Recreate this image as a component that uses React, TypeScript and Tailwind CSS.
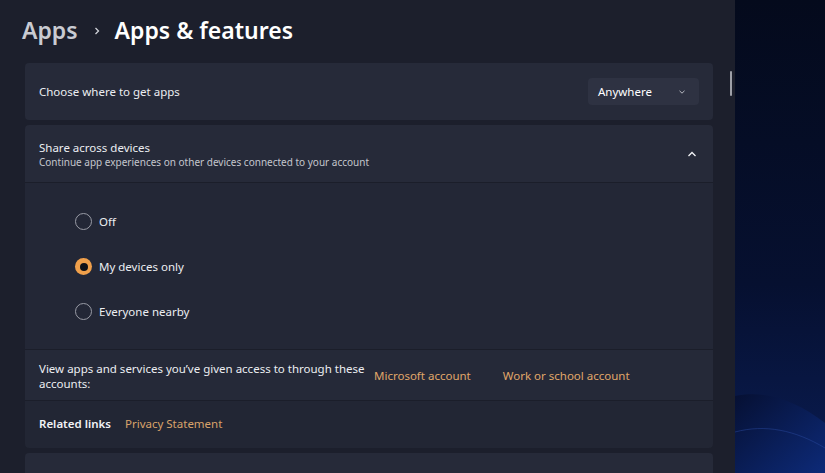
import React from 'react';

const font = { fontFamily: '"Noto Sans", "Open Sans", sans-serif' };

function Radio({ checked, label }: { checked?: boolean; label: string }) {
  return (
    <div className="flex items-center gap-[7px] h-[17px]">
      {checked ? (
        <span className="w-[17px] h-[17px] rounded-full bg-[#f0a04b] flex items-center justify-center">
          <span className="w-[8px] h-[8px] rounded-full bg-[#101218]" />
        </span>
      ) : (
        <span className="w-[17px] h-[17px] rounded-full border border-[#9a9ca6]" />
      )}
      <span className="text-[11.5px] text-[#eceef2]">{label}</span>
    </div>
  );
}

function Wallpaper() {
  return (
    <svg viewBox="0 0 90 473" preserveAspectRatio="none" className="w-full h-full block">
      <defs>
        <linearGradient id="wp" x1="0" y1="0" x2="0" y2="1">
          <stop offset="0" stopColor="#040a1c" />
          <stop offset="0.6" stopColor="#061030" />
          <stop offset="1" stopColor="#0a1c52" />
        </linearGradient>
        <linearGradient id="arc" x1="0" y1="0" x2="1" y2="1">
          <stop offset="0" stopColor="#061033" />
          <stop offset="1" stopColor="#0d2a78" />
        </linearGradient>
      </defs>
      <rect width="90" height="473" fill="url(#wp)" />
      <path d="M0 396 C30 390 60 400 90 423 L90 473 L0 473 Z" fill="url(#arc)" />
      <path d="M0 432 C30 424 60 430 90 448" fill="none" stroke="#2a4aa0" strokeWidth="0.8" opacity="0.6" />
    </svg>
  );
}

export default function App() {
  return (
    <div className="w-[825px] h-[473px] overflow-hidden flex bg-[#1c1f2c]" style={font}>
      {/* Settings window */}
      <div className="w-[735px] h-full flex flex-col bg-[#1c1f2c] pl-[25px]">
        <div className="h-[63px] shrink-0 flex items-center -ml-[3px] pb-[2px]">
          <span className="text-[23px] font-semibold text-[#c9cbd2]">Apps</span>
          <svg width="10" height="10" viewBox="0 0 10 10" className="ml-[14px] mt-[1px]">
            <path d="M3.5 2 L6.5 5 L3.5 8" fill="none" stroke="#d0d2d8" strokeWidth="1.3" />
          </svg>
          <span className="text-[23px] font-semibold text-white ml-[13px]">Apps &amp; features</span>
        </div>

        <div className="flex shrink-0">
          <div className="w-[688px] flex flex-col gap-[5px]">
            {/* Choose where to get apps */}
            <div className="h-[57px] rounded-[4px] bg-[#262a39] flex items-center justify-between pl-[14px] pr-[14px]">
              <span className="text-[11.5px] text-[#eceef2]">Choose where to get apps</span>
              <div className="w-[111px] h-[27px] rounded-[4px] bg-[#2e3242] flex items-center justify-between pl-[10px] pr-[12px]">
                <span className="text-[11.5px] text-white">Anywhere</span>
                <svg width="10" height="10" viewBox="0 0 10 10">
                  <path d="M2.5 3.8 L5 6.2 L7.5 3.8" fill="none" stroke="#b8bac2" strokeWidth="1" />
                </svg>
              </div>
            </div>

            {/* Share across devices */}
            <div className="flex flex-col gap-[1px] rounded-[4px] overflow-hidden bg-[#1b1e2a]">
              <div className="h-[57px] bg-[#262a39] flex items-center justify-between pl-[14px] pr-[15px]">
                <div className="flex flex-col pt-[1px]">
                  <span className="text-[11.5px] leading-[15px] text-[#eceef2]">Share across devices</span>
                  <span className="text-[10px] leading-[14px] text-[#c4c6cd]">
                    Continue app experiences on other devices connected to your account
                  </span>
                </div>
                <svg width="12" height="12" viewBox="0 0 12 12">
                  <path d="M2.5 8 L6 4.5 L9.5 8" fill="none" stroke="#f2f3f6" strokeWidth="1.3" />
                </svg>
              </div>
              <div className="h-[166px] bg-[#232736] flex flex-col pl-[50px] pt-[30px] gap-[28px]">
                <Radio label="Off" />
                <Radio label="My devices only" checked />
                <Radio label="Everyone nearby" />
              </div>
              <div className="h-[50px] bg-[#252938] flex items-center pl-[14px] pt-[2px]">
                <span className="w-[335px] text-[11.5px] leading-[15px] text-[#eceef2]">
                  View apps and services you’ve given access to through these accounts:
                </span>
                <span className="text-[11.5px] text-[#e0a769]">Microsoft account</span>
                <span className="ml-[32px] text-[11.5px] text-[#e0a769]">Work or school account</span>
              </div>
              <div className="h-[47px] bg-[#222634] flex items-center pl-[14px] gap-[14px] pb-[1px]">
                <span className="text-[11.5px] font-semibold text-[#f2f3f6]">Related links</span>
                <span className="text-[11.5px] text-[#d9a36a]">Privacy Statement</span>
              </div>
            </div>

            <div className="h-[40px] rounded-[4px] bg-[#262a39]" />
          </div>

          {/* Scrollbar */}
          <div className="flex-1 flex justify-end pr-[3px] pt-[8px]">
            <div className="w-[2px] h-[25px] rounded-full bg-[#9ea0a8]" />
          </div>
        </div>
      </div>

      <div className="flex-1 h-full">
        <Wallpaper />
      </div>
    </div>
  );
}
